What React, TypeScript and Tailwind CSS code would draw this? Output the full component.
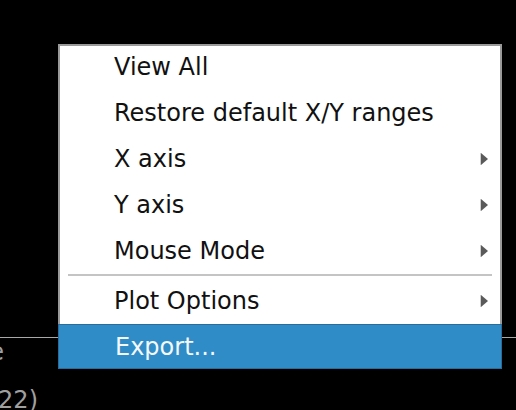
import React from "react";

const Arrow = () => (
  <svg width="10" height="14" viewBox="0 0 10 14" className="shrink-0">
    <rect x="0" y="1" width="1" height="12" fill="#d0d0d0" />
    <polygon points="1,1 8,7 1,13" fill="#5a5a5a" />
  </svg>
);

const Item = ({ label, sub }: { label: string; sub?: boolean }) => (
  <div className="h-[46px] flex items-center pl-[54px] pr-[10px] text-[#111]">
    <span className="flex-1">{label}</span>
    {sub && <Arrow />}
  </div>
);

export default function App() {
  return (
    <div
      className="relative w-[516px] h-[410px] bg-black overflow-hidden"
      style={{ fontFamily: '"DejaVu Sans", sans-serif' }}
    >
      {/* plot background content */}
      <div className="flex flex-col pt-[337px] text-[24px] leading-[28px] text-[#a0a0a0]">
        <div className="h-px w-full bg-[#a8a8a8]" />
        <div className="w-[4px] overflow-hidden flex justify-end">
          <span className="whitespace-nowrap">e</span>
        </div>
        <div className="mt-[20px] w-[38px] overflow-hidden flex justify-end">
          <span className="whitespace-nowrap">(0.22)</span>
        </div>
      </div>

      {/* context menu */}
      <div className="absolute left-[58px] top-[44px] w-[444px] bg-white border-x-2 border-t-2 border-[#9a9a9a] text-[24px]">
        <div className="-mt-[2px]">
          <Item label="View All" />
          <Item label="Restore default X/Y ranges" />
          <Item label="X axis" sub />
          <Item label="Y axis" sub />
          <Item label="Mouse Mode" sub />
          <div className="pb-[2px] px-[8px]">
            <div className="h-[2px] bg-[#c4c4c4]" />
          </div>
          <Item label="Plot Options" sub />
        </div>
        <div className="-mx-[2px] h-[45px] flex items-center pl-[56px] bg-[#308cc6] border border-[#2a6c9c] text-[#f4f8fb]">
          Export...
        </div>
      </div>
    </div>
  );
}
